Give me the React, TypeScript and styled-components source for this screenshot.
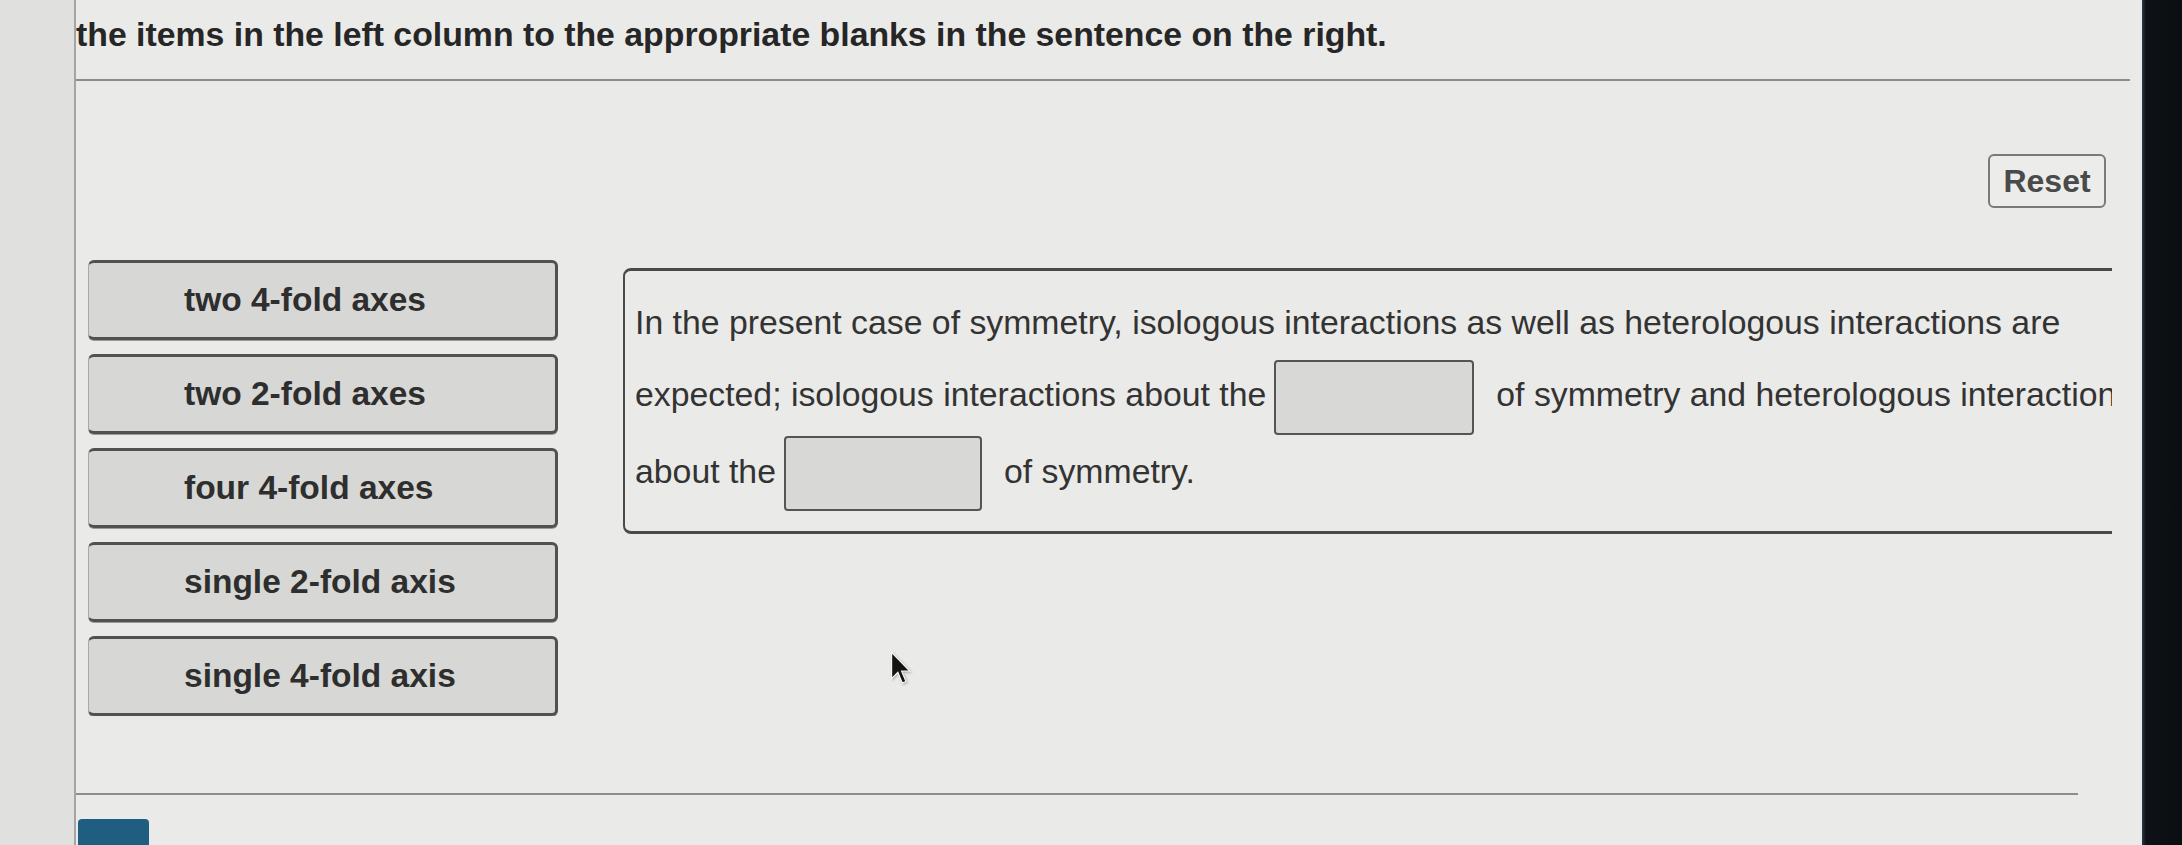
import React from 'react';
import styled, { createGlobalStyle } from 'styled-components';

const Global = createGlobalStyle`
  html, body { margin: 0; padding: 0; }
  body {
    background: #dfdfdd;
    font-family: "Liberation Sans", Arial, Helvetica, sans-serif;
    color: #2b2b2b;
    overflow: hidden;
  }
`;

const Screen = styled.div`
  display: flex;
  width: 2182px;
  height: 845px;
  overflow: hidden;
  position: relative;
`;

const LeftGutter = styled.div`
  width: 74px;
  flex: none;
  background: #e0e0de;
`;

const Panel = styled.main`
  flex: 1;
  min-width: 0;
  background: #eaeae8;
  border-left: 2px solid #a5a5a3;
  display: flex;
  flex-direction: column;
  overflow: hidden;
  & > * { flex: none; }
`;

const DarkEdge = styled.div`
  width: 40px;
  flex: none;
  background: linear-gradient(90deg, #2a3a48 0, #0e1216 4px, #0b0e11 100%);
`;

const Title = styled.h1`
  margin: 0;
  padding: 13px 0 0 0;
  font-size: 33.8px;
  line-height: 42px;
  font-weight: 700;
  color: #262626;
  white-space: nowrap;
`;

const Rule = styled.hr<{ $right: number; $top: number }>`
  margin: ${(p) => p.$top}px ${(p) => p.$right}px 0 0;
  border: 0;
  height: 2px;
  background: #8d8d8b;
`;

const ResetRow = styled.div`
  display: flex;
  justify-content: flex-end;
  margin-top: 73px;
  padding-right: 36px;
`;

const ResetButton = styled.button`
  width: 118px;
  height: 54px;
  padding: 0;
  border: 2px solid #7a7a7a;
  border-radius: 6px;
  background: #ececea;
  font-family: inherit;
  font-size: 32px;
  font-weight: 700;
  color: #4a4a4a;
  cursor: pointer;
`;

const Workspace = styled.div`
  display: flex;
  align-items: flex-start;
  gap: 65px;
  margin-top: 52px;
  margin-right: 30px;
  padding-left: 12px;
  overflow: hidden;
`;

const ItemList = styled.ul`
  list-style: none;
  margin: 0;
  padding: 0;
  display: flex;
  flex-direction: column;
  gap: 14px;
  flex: none;
`;

const Item = styled.li`
  width: 470px;
  height: 80px;
  box-sizing: border-box;
  display: flex;
  align-items: center;
  padding-left: 95px;
  background: #d7d7d5;
  border: 3px solid #515151;
  border-left: 1px solid #a9a9a7;
  border-radius: 6px;
  box-shadow: 0 1px 0 #9a9a98;
  font-size: 33.5px;
  font-weight: 700;
  color: #2e2e2e;
`;

const Sentence = styled.div`
  flex: none;
  width: 1550px;
  box-sizing: border-box;
  margin-top: 8px;
  padding: 15px 12px 20px 10px;
  border: 3px solid #4a4a4a;
  border-left-width: 2px;
  border-radius: 8px;
  font-size: 33.8px;
  line-height: 72px;
  color: #333;
`;

const Blank = styled.span<{ $w: number }>`
  display: inline-block;
  width: ${(p) => p.$w}px;
  height: 75px;
  box-sizing: border-box;
  margin: 0 22px 0 8px;
  vertical-align: middle;
  background: #d8d8d6;
  border: 2px solid #555;
  border-radius: 4px;
`;

const FooterButton = styled.div`
  margin-top: 24px;
  margin-left: 2px;
  width: 71px;
  height: 40px;
  background: #1f5e80;
  border-radius: 4px 4px 0 0;
`;

const Pointer = styled.svg`
  position: absolute;
  left: 890px;
  top: 651px;
  width: 22px;
  height: 34px;
  filter: drop-shadow(1px 1px 1px rgba(0, 0, 0, 0.25));
`;

const items = ['two 4-fold axes', 'two 2-fold axes', 'four 4-fold axes', 'single 2-fold axis', 'single 4-fold axis'];

export default function App() {
  return (
    <Screen>
      <Global />
      <LeftGutter />
      <Panel>
        <Title>the items in the left column to the appropriate blanks in the sentence on the right.</Title>
        <Rule $top={24} $right={12} />
        <ResetRow>
          <ResetButton>Reset</ResetButton>
        </ResetRow>
        <Workspace>
          <ItemList>
            {items.map((t) => (
              <Item key={t}>{t}</Item>
            ))}
          </ItemList>
          <Sentence>
            In the present case of symmetry, isologous interactions as well as heterologous interactions are
            expected; isologous interactions about the<Blank $w={200} />of symmetry and heterologous interactions
            about the<Blank $w={198} />of symmetry.
          </Sentence>
        </Workspace>
        <Rule $top={77} $right={64} />
        <FooterButton />
      </Panel>
      <DarkEdge />
      <Pointer viewBox="0 0 17 27">
        <path d="M1 1 L1 22 L6 17 L9.5 25.5 L12.5 24.2 L9 16 L15.5 16 Z" fill="#141414" stroke="#f4f4f4" strokeWidth="1" />
      </Pointer>
    </Screen>
  );
}
